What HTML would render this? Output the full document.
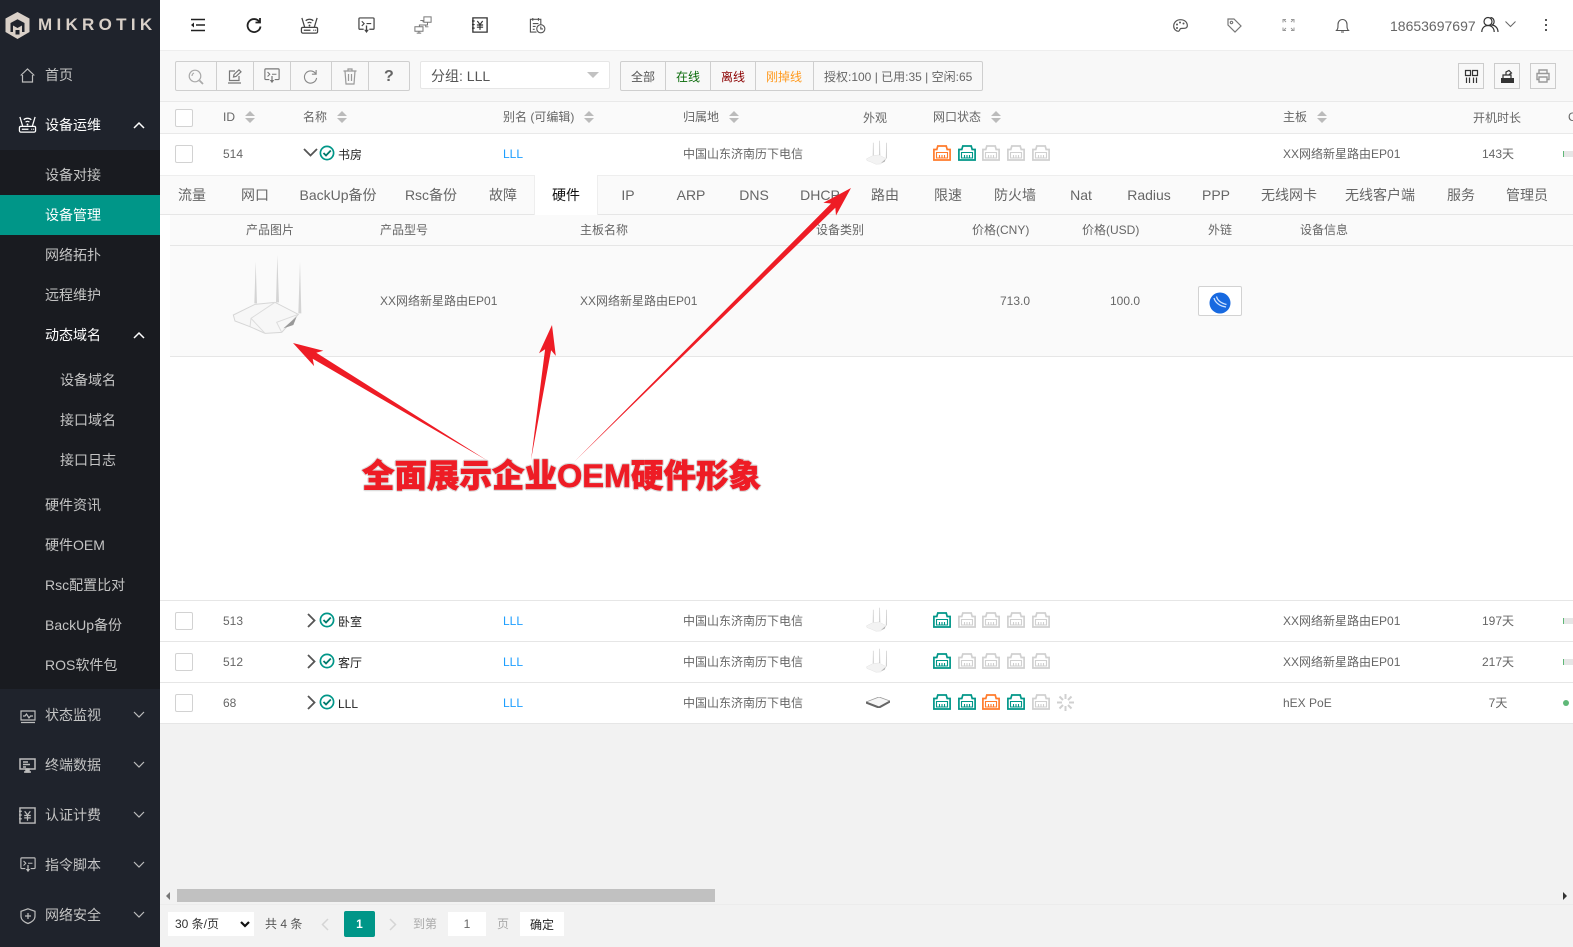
<!DOCTYPE html>
<html lang="zh"><head><meta charset="utf-8"><title>MikroTik</title>
<style>
html,body{margin:0;padding:0;width:1573px;height:947px;overflow:hidden;background:#f2f2f2}
body{position:relative;font-family:"Liberation Sans","Noto Sans CJK SC",sans-serif;font-size:12px;color:#666}
.a,.t,.i,svg.i{position:absolute}
.t{white-space:nowrap;line-height:20px;height:20px}
.c{transform:translateX(-50%)}
.r{transform:translateX(-100%)}
.b{background:#fff;border:1px solid #d2d2d2;box-sizing:border-box}
.cb{position:absolute;left:175px;width:18px;height:18px;background:#fff;border:1px solid #d2d2d2;border-radius:2px;box-sizing:border-box}
.side{font-size:14px;color:#c4c4c4}
.w{color:#fff}
.tab{font-size:14px;color:#666}
.hl{position:absolute;height:1px;background:#e6e6e6}
.lk{color:#1e9fff}
.nm{color:#222}
svg.i{fill:none;stroke:currentColor;stroke-width:1.2;overflow:visible}
.or{color:#ff7b2b}.gr{color:#009688}.gy{color:#d0d0d0}
</style></head><body>
<svg width="0" height="0" style="position:absolute">
<defs>
<symbol id="sort" viewBox="0 0 10 12"><path d="M5 0l5 5H0zM5 12L0 7h10z" fill="#bbb" stroke="none"/></symbol>
<symbol id="port" viewBox="0 0 18 16"><path d="M4.800 1h8.400l1 3.500h2.900V15H.9V4.500h2.900z" fill="none" stroke="currentColor" stroke-width="1.700"/><path d="M3.500 7.500h11V13h-11z" fill="none" stroke="currentColor" stroke-width="1.100"/><path d="M6.500 10v3M9 10v3M11.500 10v3" stroke="currentColor" stroke-width="1.100"/></symbol>
<symbol id="ok" viewBox="0 0 16 16"><circle cx="8" cy="8" r="6.600" fill="none" stroke="#009688" stroke-width="1.700"/><path d="M4.500 8l2.500 2.500 4.800-5" fill="none" stroke="#00796b" stroke-width="1.800"/></symbol>
<symbol id="rt" viewBox="50 25 210 245"><path d="M122 50l4 125h-7z M187 30l4 142h-8z M255 50l3 155h-8z" fill="#dedede"/><path d="M55 210l65-32 60-6 70 36-50 54-50 3-45-20-45-17z" fill="#f3f3f3" stroke="#ddd" stroke-width="4"/><path d="M205 250l40-35-10 25z" fill="#bbb"/></symbol>
<symbol id="hex" viewBox="0 0 24 11"><path d="M0 5l13-5 11 4-11 6z" fill="#f6f6f6" stroke="#999" stroke-width=".8"/><path d="M0 5l13 5v1L0 6z" fill="#444"/><path d="M13 10l11-6v1l-11 6z" fill="#999"/></symbol>
<symbol id="router" viewBox="0 0 20 20"><path d="M2 2l3 10M18 2l-3 10M6 5a6 6 0 0 1 8 0M8 7.500a3 3 0 0 1 4 0" fill="none" stroke="currentColor" stroke-width="1.300"/><circle cx="10" cy="10" r="1" fill="currentColor" stroke="none"/><rect x="1.500" y="12" width="17" height="6" rx="1.500" fill="none" stroke="currentColor" stroke-width="1.300"/><path d="M4 15h7M14 15h1M16 15h1" stroke="currentColor" stroke-width="1.300"/></symbol>
<symbol id="term" viewBox="0 0 18 18"><path d="M6 13H2a1 1 0 0 1-1-1V2a1 1 0 0 1 1-1h14a1 1 0 0 1 1 1v10a1 1 0 0 1-1 1h-4" fill="none" stroke="currentColor" stroke-width="1.300"/><path d="M4 4.500L6.500 7 4 9.500M9 7h5" fill="none" stroke="currentColor" stroke-width="1.200"/><path d="M9 9v6" stroke="currentColor" stroke-width="1.400"/><path d="M6.500 13.500h5L9 17z" fill="currentColor" stroke="none"/></symbol>
<symbol id="net" viewBox="0 0 20 20"><path d="M11 1h8v6h-8zM1 12h9v5H1zM3 19h5M5.500 17v2M15 7v3H6v2" fill="none" stroke="currentColor" stroke-width="1.100"/><path d="M7 5h3v2M13 10v2h3" fill="none" stroke="currentColor" stroke-width="1"/></symbol>
<symbol id="yen" viewBox="0 0 18 18"><path d="M1 1h16v16H1zM1 1v3M1 7v2M1 12v2" fill="none" stroke="currentColor" stroke-width="1.500"/><path d="M6 4.500L9 8.500l3-4M5.500 9h7M5.500 11.500h7M9 8.500V14.500" fill="none" stroke="currentColor" stroke-width="1.300"/><path d="M0 4.500h3M0 8.500h3M0 12.500h3" stroke="currentColor" stroke-width="1.300"/></symbol>
<symbol id="cal" viewBox="0 0 18 18"><path d="M8 16H1.500V2.500h11V8M4 1v3M10 1v3M4 7h6M4 10h3M4 13h2" fill="none" stroke="currentColor" stroke-width="1.200"/><circle cx="12.500" cy="12.500" r="4.300" fill="none" stroke="currentColor" stroke-width="1.200"/><path d="M12.500 10v2.700h2.300" fill="none" stroke="currentColor"/></symbol>
</defs>
</svg>

<!-- main panels -->
<div class="a" style="left:160px;top:0;width:1413px;height:50px;background:#fff"></div>
<div class="a" style="left:160px;top:50px;width:1413px;height:51px;background:#f8f8f8;border-top:1px solid #eee;box-sizing:border-box"></div>
<div class="a" style="left:160px;top:101px;width:1413px;height:33px;background:#fafafa;border-top:1px solid #e9e9e9;border-bottom:1px solid #e9e9e9;box-sizing:border-box"></div>
<div class="a" style="left:160px;top:134px;width:1413px;height:589px;background:#fff"></div>
<div class="a" style="left:160px;top:175px;width:1413px;height:40px;background:#fafafa;border-top:1px solid #eee;border-bottom:1px solid #e6e6e6;box-sizing:border-box"></div>
<div class="a" style="left:534px;top:175px;width:64px;height:41px;background:#fff;border-left:1px solid #eee;border-right:1px solid #eee;box-sizing:border-box"></div>
<div class="a" style="left:170px;top:215px;width:1403px;height:142px;background:#fafafa;border-bottom:1px solid #e6e6e6;box-sizing:border-box"></div>
<div class="hl" style="left:170px;top:245px;width:1403px"></div>
<div class="hl" style="left:160px;top:600px;width:1413px"></div>
<div class="hl" style="left:160px;top:641px;width:1413px"></div>
<div class="hl" style="left:160px;top:682px;width:1413px"></div>
<div class="hl" style="left:160px;top:723px;width:1413px"></div>

<!-- sidebar -->
<div class="a" style="left:0;top:0;width:160px;height:947px;background:#1f232c"></div>
<div class="a" style="left:0;top:150px;width:160px;height:539px;background:#191b20"></div>
<div class="a" style="left:0;top:195px;width:160px;height:40px;background:#009688"></div>
<svg class="i" style="left:5px;top:12px;color:#d9d0c8" width="25" height="27" viewBox="0 0 25 27"><path d="M12.500 0L24.500 6.500V20L12.500 27 .5 20V6.500z" fill="#d9d0c8" stroke="none"/><path d="M5.500 11l7-3.800 7 3.800v9h-2.500v-6.500l-4.500 2.500-4.500-2.500V20H5.500z" fill="#1f232c" stroke="none"/><path d="M10.500 18h4v4.500h-4z" fill="#1f232c" stroke="none"/></svg>
<div class="t" style="left:38px;top:15px;font-size:17px;font-weight:bold;letter-spacing:4.300px;color:#d9d0c8">MIKROTIK</div>

<svg class="i" style="left:20px;top:68px;color:#bdbdbd" width="15" height="15" viewBox="0 0 15 15"><path d="M.7 7.500L7.500 1l6.800 6.500M2.500 7v7h10V7"/></svg>
<div class="t side" style="left:45px;top:65px">首页</div>
<svg class="i" style="left:18px;top:115px;color:#fff" width="19" height="19"><use href="#router"/></svg>
<div class="t side w" style="left:45px;top:115px">设备运维</div>
<svg class="i" style="left:133px;top:122px;color:#fff;stroke-width:1.500" width="12" height="7" viewBox="0 0 12 7"><path d="M1 6l5-5 5 5"/></svg>
<div class="t side" style="left:45px;top:165px">设备对接</div>
<div class="t side w" style="left:45px;top:205px">设备管理</div>
<div class="t side" style="left:45px;top:245px">网络拓扑</div>
<div class="t side" style="left:45px;top:285px">远程维护</div>
<div class="t side w" style="left:45px;top:325px">动态域名</div>
<svg class="i" style="left:133px;top:332px;color:#fff;stroke-width:1.500" width="12" height="7" viewBox="0 0 12 7"><path d="M1 6l5-5 5 5"/></svg>
<div class="t side" style="left:60px;top:370px">设备域名</div>
<div class="t side" style="left:60px;top:410px">接口域名</div>
<div class="t side" style="left:60px;top:450px">接口日志</div>
<div class="t side" style="left:45px;top:495px">硬件资讯</div>
<div class="t side" style="left:45px;top:535px">硬件OEM</div>
<div class="t side" style="left:45px;top:575px">Rsc配置比对</div>
<div class="t side" style="left:45px;top:615px">BackUp备份</div>
<div class="t side" style="left:45px;top:655px">ROS软件包</div>

<svg class="i" style="left:20px;top:710px;color:#bdbdbd" width="16" height="13" viewBox="0 0 16 13"><path d="M1 1h14v9H1zM1 12.500h14M3 6h2l1.500-2L9 8l1.500-2H13"/></svg>
<div class="t side" style="left:45px;top:705px">状态监视</div>
<svg class="i" style="left:19px;top:758px;color:#bdbdbd;stroke-width:1.500" width="17" height="15" viewBox="0 0 17 15"><path d="M1 1h15v10H1zM4 4h5M4 6.500h7M4 9h3M5 14h7"/><path d="M7 11h3v3H7z" fill="#bdbdbd"/></svg>
<div class="t side" style="left:45px;top:755px">终端数据</div>
<svg class="i" style="left:19px;top:807px;color:#bdbdbd" width="17" height="17"><use href="#yen"/></svg>
<div class="t side" style="left:45px;top:805px">认证计费</div>
<svg class="i" style="left:20px;top:857px;color:#bdbdbd" width="16" height="16"><use href="#term"/></svg>
<div class="t side" style="left:45px;top:855px">指令脚本</div>
<svg class="i" style="left:20px;top:908px;color:#bdbdbd" width="16" height="16" viewBox="0 0 16 16"><path d="M8 .8l7 2.500v5c0 3.500-3.500 6-7 7.200-3.500-1.200-7-3.700-7-7.200v-5zM8 5v6M5 8h6"/></svg>
<div class="t side" style="left:45px;top:905px">网络安全</div>
<svg class="i" style="left:133px;top:711px;color:#bdbdbd" width="12" height="7" viewBox="0 0 12 7"><path d="M1 1l5 5 5-5"/></svg>
<svg class="i" style="left:133px;top:761px;color:#bdbdbd" width="12" height="7" viewBox="0 0 12 7"><path d="M1 1l5 5 5-5"/></svg>
<svg class="i" style="left:133px;top:811px;color:#bdbdbd" width="12" height="7" viewBox="0 0 12 7"><path d="M1 1l5 5 5-5"/></svg>
<svg class="i" style="left:133px;top:861px;color:#bdbdbd" width="12" height="7" viewBox="0 0 12 7"><path d="M1 1l5 5 5-5"/></svg>
<svg class="i" style="left:133px;top:911px;color:#bdbdbd" width="12" height="7" viewBox="0 0 12 7"><path d="M1 1l5 5 5-5"/></svg>

<!-- top bar icons -->
<svg class="i" style="left:190px;top:18px;color:#222;stroke-width:1.500" width="16" height="14" viewBox="0 0 16 14"><path d="M1 1.500h14M6 7h9M1 12.500h14"/><path d="M4 4.500L1 7l3 2.500z" fill="#222" stroke="none"/></svg>
<svg class="i" style="left:246px;top:17px;color:#222;stroke-width:1.800" width="16" height="16" viewBox="0 0 16 16"><path d="M13.500 5A6.500 6.500 0 1 0 14.500 9.500M14 1v4.500H9.500"/></svg>
<svg class="i" style="left:300px;top:16px;color:#444" width="19" height="19"><use href="#router"/></svg>
<svg class="i" style="left:358px;top:17px;color:#444" width="17" height="17"><use href="#term"/></svg>
<svg class="i" style="left:414px;top:16px;color:#777" width="18" height="18"><use href="#net"/></svg>
<svg class="i" style="left:472px;top:17px;color:#333" width="16" height="16"><use href="#yen"/></svg>
<svg class="i" style="left:529px;top:17px;color:#555" width="17" height="17"><use href="#cal"/></svg>

<svg class="i" style="left:1173px;top:19px;color:#555" width="15" height="13" viewBox="0 0 15 13"><path d="M7.500.7C3.500.7.700 3.500.700 7c0 3.500 2.800 5.300 4.500 5.300 1.800 0 1-2.300 2.600-2.800 1.500-.5 6.500.8 6.500-2.800C14.300 3 11.500.7 7.500.7z"/><circle cx="4" cy="5.500" r="1" fill="#555" stroke="none"/><circle cx="7" cy="3.500" r="1" fill="#555" stroke="none"/><circle cx="4" cy="9" r="1" fill="#555" stroke="none"/><circle cx="10.500" cy="4.500" r="1" fill="#555" stroke="none"/></svg>
<svg class="i" style="left:1227px;top:18px;color:#777" width="15" height="15" viewBox="0 0 15 15"><path d="M1 1h6l7 7-6 6-7-7z"/><circle cx="4.500" cy="4.500" r="1.200"/></svg>
<svg class="i" style="left:1283px;top:19px;color:#999;stroke-width:1" width="11" height="12" viewBox="0 0 11 12"><path d="M0 3.500V.5h3M8 .5h3v3M0 8.500v3h3M8 11.500h3v-3M1 1l2 2M10 1L8 3M1 11l2-2M10 11L8 9"/></svg>
<svg class="i" style="left:1336px;top:18px;color:#555;stroke-width:1.100" width="13" height="15" viewBox="0 0 13 15"><path d="M.5 12.500h12c-1.500-1.500-1.500-3-1.500-6C11 3.500 9 1.500 6.500 1.500S2 3.500 2 6.500c0 3 0 4.500-1.500 6zM5 14h3"/></svg>
<div class="t" style="left:1390px;top:16px;font-size:14px;color:#666">18653697697</div>
<svg class="i" style="left:1481px;top:16px;color:#333" width="18" height="17" viewBox="0 0 18 17"><circle cx="7" cy="5.500" r="4"/><path d="M.8 16c0-4 2.700-6.500 6.200-6.500s6.200 2.500 6.200 6.500M9.500 1.500a4 4 0 0 1 1.500 7.500c3.300.5 6 3 6 7"/></svg>
<svg class="i" style="left:1505px;top:21px;color:#666;stroke-width:1" width="11" height="6" viewBox="0 0 11 6"><path d="M.5.500l5 5 5-5"/></svg>
<div class="a" style="left:1545px;top:19px;width:2px;height:2px;background:#555"></div>
<div class="a" style="left:1545px;top:24px;width:2px;height:2px;background:#555"></div>
<div class="a" style="left:1545px;top:29px;width:2px;height:2px;background:#555"></div>

<!-- toolbar -->
<div class="a" style="left:175px;top:61px;width:235px;height:30px;border:1px solid #cfcfcf;border-radius:2px;box-sizing:border-box;background:#f8f8f8"></div>
<div class="a" style="left:216px;top:61px;width:1px;height:30px;background:#cfcfcf"></div>
<div class="a" style="left:253px;top:61px;width:1px;height:30px;background:#cfcfcf"></div>
<div class="a" style="left:290px;top:61px;width:1px;height:30px;background:#cfcfcf"></div>
<div class="a" style="left:331px;top:61px;width:1px;height:30px;background:#cfcfcf"></div>
<div class="a" style="left:368px;top:61px;width:1px;height:30px;background:#cfcfcf"></div>
<svg class="i" style="left:188px;top:69px;color:#aaa" width="16" height="16" viewBox="0 0 16 16"><circle cx="7" cy="7" r="5.800"/><path d="M11.500 11.500l3.500 3.500" stroke-width="1.800"/><path d="M4 7a3.500 3.500 0 0 1 2-3"/></svg>
<svg class="i" style="left:227px;top:69px;color:#777" width="15" height="15" viewBox="0 0 15 15"><path d="M8 2H2.500v9.500H12V7M1 14h13M6.500 8L7 5.500 12 .8l2 2L9 7.500z"/></svg>
<svg class="i" style="left:264px;top:68px;color:#777" width="16" height="16"><use href="#term"/></svg>
<svg class="i" style="left:303px;top:69px;color:#888" width="15" height="15" viewBox="0 0 16 16"><path d="M13.500 5A6.500 6.500 0 1 0 14.500 9.500M14 1v4.500H9.500"/></svg>
<svg class="i" style="left:343px;top:68px;color:#999" width="14" height="17" viewBox="0 0 14 17"><path d="M.5 3h13M5 3V1h4v2M2 3l1 13h8l1-13M5.500 6v7M8.500 6v7"/></svg>
<div class="t" style="left:384px;top:67px;font-size:16px;font-weight:bold;color:#666">?</div>

<div class="a b" style="left:420px;top:61px;width:190px;height:28px;border-color:#e6e6e6;border-radius:2px"></div>
<div class="t" style="left:431px;top:66px;font-size:14px;color:#555">分组: LLL</div>
<div class="a" style="left:587px;top:72px;width:0;height:0;border:6px solid transparent;border-top:6px solid #c2c2c2;border-bottom:0"></div>

<div class="a" style="left:620px;top:61px;width:363px;height:30px;border:1px solid #cfcfcf;border-radius:2px;box-sizing:border-box;background:#f8f8f8"></div>
<div class="a" style="left:665px;top:61px;width:1px;height:30px;background:#cfcfcf"></div>
<div class="a" style="left:710px;top:61px;width:1px;height:30px;background:#cfcfcf"></div>
<div class="a" style="left:755px;top:61px;width:1px;height:30px;background:#cfcfcf"></div>
<div class="a" style="left:813px;top:61px;width:1px;height:30px;background:#cfcfcf"></div>
<div class="t" style="left:631px;top:67px;color:#555">全部</div>
<div class="t" style="left:676px;top:67px;color:#0a6b0a">在线</div>
<div class="t" style="left:721px;top:67px;color:#8b0000">离线</div>
<div class="t" style="left:766px;top:67px;color:#ff9a1f">刚掉线</div>
<div class="t" style="left:824px;top:67px;color:#666">授权:100 | 已用:35 | 空闲:65</div>

<div class="a" style="left:1458px;top:63px;width:26px;height:26px;border:1px solid #ccc;box-sizing:border-box"></div>
<div class="a" style="left:1494px;top:63px;width:26px;height:26px;border:1px solid #ccc;box-sizing:border-box"></div>
<div class="a" style="left:1530px;top:63px;width:26px;height:26px;border:1px solid #ccc;box-sizing:border-box"></div>
<svg class="i" style="left:1465px;top:70px;color:#333" width="13" height="13" viewBox="0 0 13 13"><path d="M.5.500h5v5h-5zM7.500.5h5v5h-5zM1.500 7.500V13M4.500 7.500V13M8.500 7.500V13M11.500 7.500V13"/></svg>
<svg class="i" style="left:1501px;top:70px;color:#333" width="13" height="13" viewBox="0 0 13 13"><path d="M0 8h13v5H0z" fill="#333" stroke="none"/><path d="M2 8V5h8v3M5 5V2l3-1.500L10.500 3 8 4.500" stroke-width="1.200"/></svg>
<svg class="i" style="left:1536px;top:69px;color:#999;stroke-width:1.400" width="14" height="14" viewBox="0 0 14 14"><path d="M3 4V1h8v3M3 10.500H1V4.500h12v6h-2M3 8h8v5H3z"/></svg>

<!-- table header -->
<div class="cb" style="top:109px"></div>
<div class="t" style="left:223px;top:107px">ID</div>
<svg class="i" style="left:245px;top:111px" width="10" height="12"><use href="#sort"/></svg>
<div class="t" style="left:303px;top:107px">名称</div>
<svg class="i" style="left:337px;top:111px" width="10" height="12"><use href="#sort"/></svg>
<div class="t" style="left:503px;top:107px">别名 (可编辑)</div>
<svg class="i" style="left:584px;top:111px" width="10" height="12"><use href="#sort"/></svg>
<div class="t" style="left:683px;top:107px">归属地</div>
<svg class="i" style="left:729px;top:111px" width="10" height="12"><use href="#sort"/></svg>
<div class="t" style="left:863px;top:108px">外观</div>
<div class="t" style="left:933px;top:107px">网口状态</div>
<svg class="i" style="left:991px;top:111px" width="10" height="12"><use href="#sort"/></svg>
<div class="t" style="left:1283px;top:107px">主板</div>
<svg class="i" style="left:1317px;top:111px" width="10" height="12"><use href="#sort"/></svg>
<div class="t" style="left:1473px;top:108px">开机时长</div>
<div class="t" style="left:1568px;top:107px">C</div>

<!-- row 514 -->
<div class="cb" style="top:145px"></div>
<div class="t" style="left:223px;top:144px">514</div>
<svg class="i" style="left:303px;top:148px;color:#555;stroke-width:1.800" width="15" height="9" viewBox="0 0 15 9"><path d="M1 1l6.500 6.500L14 1"/></svg>
<svg class="i" style="left:319px;top:145px" width="16" height="16"><use href="#ok"/></svg>
<div class="t nm" style="left:338px;top:145px">书房</div>
<div class="t lk" style="left:503px;top:144px">LLL</div>
<div class="t" style="left:683px;top:144px">中国山东济南历下电信</div>
<svg class="i" style="left:866px;top:140px" width="21" height="25"><use href="#rt"/></svg>
<svg class="i or" style="left:933px;top:145px" width="18" height="16"><use href="#port"/></svg>
<svg class="i gr" style="left:958px;top:145px" width="18" height="16"><use href="#port"/></svg>
<svg class="i gy" style="left:982px;top:145px" width="18" height="16"><use href="#port"/></svg>
<svg class="i gy" style="left:1007px;top:145px" width="18" height="16"><use href="#port"/></svg>
<svg class="i gy" style="left:1032px;top:145px" width="18" height="16"><use href="#port"/></svg>
<div class="t" style="left:1283px;top:144px">XX网络新星路由EP01</div>
<div class="t c" style="left:1498px;top:144px">143天</div>
<div class="a" style="left:1563px;top:151px;width:10px;height:6px;background:#e6e6e6;border-left:1px solid #5fb878;box-sizing:border-box"></div>

<!-- tabs -->
<div class="t c tab" style="left:192px;top:185px">流量</div>
<div class="t c tab" style="left:255px;top:185px">网口</div>
<div class="t c tab" style="left:338px;top:185px">BackUp备份</div>
<div class="t c tab" style="left:431px;top:185px">Rsc备份</div>
<div class="t c tab" style="left:503px;top:185px">故障</div>
<div class="t c tab" style="left:566px;top:185px;color:#111">硬件</div>
<div class="t c tab" style="left:628px;top:185px">IP</div>
<div class="t c tab" style="left:691px;top:185px">ARP</div>
<div class="t c tab" style="left:754px;top:185px">DNS</div>
<div class="t c tab" style="left:820px;top:185px">DHCP</div>
<div class="t c tab" style="left:885px;top:185px">路由</div>
<div class="t c tab" style="left:948px;top:185px">限速</div>
<div class="t c tab" style="left:1015px;top:185px">防火墙</div>
<div class="t c tab" style="left:1081px;top:185px">Nat</div>
<div class="t c tab" style="left:1149px;top:185px">Radius</div>
<div class="t c tab" style="left:1216px;top:185px">PPP</div>
<div class="t c tab" style="left:1289px;top:185px">无线网卡</div>
<div class="t c tab" style="left:1380px;top:185px">无线客户端</div>
<div class="t c tab" style="left:1461px;top:185px">服务</div>
<div class="t c tab" style="left:1527px;top:185px">管理员</div>

<!-- sub table -->
<div class="t" style="left:246px;top:220px">产品图片</div>
<div class="t" style="left:380px;top:220px">产品型号</div>
<div class="t" style="left:580px;top:220px">主板名称</div>
<div class="t" style="left:816px;top:220px">设备类别</div>
<div class="t" style="left:972px;top:220px">价格(CNY)</div>
<div class="t" style="left:1082px;top:220px">价格(USD)</div>
<div class="t" style="left:1208px;top:220px">外链</div>
<div class="t" style="left:1300px;top:220px">设备信息</div>
<svg class="i" style="left:215px;top:245px" width="110" height="100" viewBox="0 0 330 300"><path d="M122 50l4 125h-8z M187 30l5 142h-9z M255 50l4 155h-9z" fill="#d4d4d4" stroke="none"/><path d="M55 210l65-32 60-6 70 36-50 54-50 3-45-20-45-17z" fill="#f7f7f7" stroke="#d6d6d6" stroke-width="3"/><path d="M105 245l3-25 72-48M150 265l-42-45M200 262l-15-30 65-24" stroke="#dcdcdc" stroke-width="3" fill="none"/><path d="M205 250l40-35-10 25z" fill="#999" stroke="none"/></svg>
<div class="t" style="left:380px;top:291px">XX网络新星路由EP01</div>
<div class="t" style="left:580px;top:291px">XX网络新星路由EP01</div>
<div class="t r" style="left:1030px;top:291px">713.0</div>
<div class="t r" style="left:1140px;top:291px">100.0</div>
<div class="a" style="left:1198px;top:286px;width:44px;height:30px;background:#fff;border:1px solid #d2d2d2;border-radius:2px;box-sizing:border-box"></div>
<svg class="i" style="left:1209px;top:292px" width="22" height="22" viewBox="0 0 22 22"><circle cx="11" cy="11" r="10.500" fill="#1769e0" stroke="none"/><path d="M5 6c1 4 5 8 12 9M7.500 4.500c1 4 4 6.500 10 8" stroke="#cfe3ff" stroke-width="1.300" fill="none"/></svg>

<!-- rows -->
<div class="cb" style="top:612px"></div>
<div class="t" style="left:223px;top:611px">513</div>
<svg class="i" style="left:307px;top:613px;color:#555;stroke-width:1.800" width="9" height="15" viewBox="0 0 9 15"><path d="M1 1l6.500 6.500L1 14"/></svg>
<svg class="i" style="left:319px;top:612px" width="16" height="16"><use href="#ok"/></svg>
<div class="t nm" style="left:338px;top:612px">卧室</div>
<div class="t lk" style="left:503px;top:611px">LLL</div>
<div class="t" style="left:683px;top:611px">中国山东济南历下电信</div>
<svg class="i" style="left:866px;top:607px" width="21" height="25"><use href="#rt"/></svg>
<svg class="i gr" style="left:933px;top:612px" width="18" height="16"><use href="#port"/></svg>
<svg class="i gy" style="left:958px;top:612px" width="18" height="16"><use href="#port"/></svg>
<svg class="i gy" style="left:982px;top:612px" width="18" height="16"><use href="#port"/></svg>
<svg class="i gy" style="left:1007px;top:612px" width="18" height="16"><use href="#port"/></svg>
<svg class="i gy" style="left:1032px;top:612px" width="18" height="16"><use href="#port"/></svg>
<div class="t" style="left:1283px;top:611px">XX网络新星路由EP01</div>
<div class="t c" style="left:1498px;top:611px">197天</div>
<div class="a" style="left:1563px;top:618px;width:10px;height:6px;background:#e6e6e6;border-left:1px solid #5fb878;box-sizing:border-box"></div>

<div class="cb" style="top:653px"></div>
<div class="t" style="left:223px;top:652px">512</div>
<svg class="i" style="left:307px;top:654px;color:#555;stroke-width:1.800" width="9" height="15" viewBox="0 0 9 15"><path d="M1 1l6.500 6.500L1 14"/></svg>
<svg class="i" style="left:319px;top:653px" width="16" height="16"><use href="#ok"/></svg>
<div class="t nm" style="left:338px;top:653px">客厅</div>
<div class="t lk" style="left:503px;top:652px">LLL</div>
<div class="t" style="left:683px;top:652px">中国山东济南历下电信</div>
<svg class="i" style="left:866px;top:648px" width="21" height="25"><use href="#rt"/></svg>
<svg class="i gr" style="left:933px;top:653px" width="18" height="16"><use href="#port"/></svg>
<svg class="i gy" style="left:958px;top:653px" width="18" height="16"><use href="#port"/></svg>
<svg class="i gy" style="left:982px;top:653px" width="18" height="16"><use href="#port"/></svg>
<svg class="i gy" style="left:1007px;top:653px" width="18" height="16"><use href="#port"/></svg>
<svg class="i gy" style="left:1032px;top:653px" width="18" height="16"><use href="#port"/></svg>
<div class="t" style="left:1283px;top:652px">XX网络新星路由EP01</div>
<div class="t c" style="left:1498px;top:652px">217天</div>
<div class="a" style="left:1563px;top:659px;width:10px;height:6px;background:#e6e6e6;border-left:1px solid #5fb878;box-sizing:border-box"></div>

<div class="cb" style="top:694px"></div>
<div class="t" style="left:223px;top:693px">68</div>
<svg class="i" style="left:307px;top:695px;color:#555;stroke-width:1.800" width="9" height="15" viewBox="0 0 9 15"><path d="M1 1l6.500 6.500L1 14"/></svg>
<svg class="i" style="left:319px;top:694px" width="16" height="16"><use href="#ok"/></svg>
<div class="t nm" style="left:338px;top:694px">LLL</div>
<div class="t lk" style="left:503px;top:693px">LLL</div>
<div class="t" style="left:683px;top:693px">中国山东济南历下电信</div>
<svg class="i" style="left:866px;top:697px" width="24" height="11"><use href="#hex"/></svg>
<svg class="i gr" style="left:933px;top:694px" width="18" height="16"><use href="#port"/></svg>
<svg class="i gr" style="left:958px;top:694px" width="18" height="16"><use href="#port"/></svg>
<svg class="i or" style="left:982px;top:694px" width="18" height="16"><use href="#port"/></svg>
<svg class="i gr" style="left:1007px;top:694px" width="18" height="16"><use href="#port"/></svg>
<svg class="i gy" style="left:1032px;top:694px" width="18" height="16"><use href="#port"/></svg>
<svg class="i gy" style="left:1056px;top:693px;stroke-width:2" width="19" height="19" viewBox="0 0 19 19"><path d="M9.500 1v5M9.500 13v5M1 9.500h5M13 9.500h5M3.500 3.500L7 7M12 12l3.500 3.500M15.500 3.500L12 7M7 12l-3.500 3.500"/></svg>
<div class="t" style="left:1283px;top:693px">hEX PoE</div>
<div class="t c" style="left:1498px;top:693px">7天</div>
<div class="a" style="left:1563px;top:700px;width:6px;height:6px;border-radius:3px;background:#5fb878"></div>

<!-- scrollbar -->
<div class="a" style="left:166px;top:892px;width:0;height:0;border:4px solid transparent;border-right:4px solid #777;border-left:0"></div>
<div class="a" style="left:177px;top:889px;width:538px;height:13px;background:#c1c1c1"></div>
<div class="a" style="left:1563px;top:892px;width:0;height:0;border:4px solid transparent;border-left:4px solid #333;border-right:0"></div>
<div class="hl" style="left:160px;top:904px;width:1413px;background:#ececec"></div>

<!-- pagination -->
<div class="a" style="left:168px;top:912px;width:86px;height:24px;background:#fff"></div>
<div class="t" style="left:175px;top:914px;color:#333">30 条/页</div>
<svg class="i" style="left:240px;top:921px;color:#111;stroke-width:2.200" width="10" height="6" viewBox="0 0 10 6"><path d="M1 1l4 4 4-4"/></svg>
<div class="t" style="left:265px;top:914px;color:#555">共 4 条</div>
<svg class="i" style="left:321px;top:918px;color:#d5d5d5;stroke-width:1.500" width="8" height="13" viewBox="0 0 8 13"><path d="M7 1L1.500 6.500 7 12"/></svg>
<div class="a" style="left:344px;top:911px;width:31px;height:26px;background:#009688;border-radius:2px"></div>
<div class="t c" style="left:359.500px;top:914px;color:#fff;font-weight:bold">1</div>
<svg class="i" style="left:389px;top:918px;color:#d5d5d5;stroke-width:1.500" width="8" height="13" viewBox="0 0 8 13"><path d="M1 1l5.500 5.500L1 12"/></svg>
<div class="t" style="left:413px;top:914px;color:#aaa">到第</div>
<div class="a" style="left:448px;top:912px;width:38px;height:24px;background:#fff"></div>
<div class="t c" style="left:467px;top:914px;color:#666">1</div>
<div class="t" style="left:497px;top:914px;color:#aaa">页</div>
<div class="a" style="left:520px;top:912px;width:44px;height:24px;background:#fff"></div>
<div class="t c" style="left:542px;top:915px;color:#222">确定</div>

<!-- arrows -->
<svg class="a" style="left:0;top:0" width="1573" height="947">
<polygon fill="#ee1c25" points="293,343 323.300,350.700 316.300,352.800 488,461 312.700,358.800 314.100,366.100"/>
<polygon fill="#ee1c25" points="552,325 555.800,355.900 551.100,350.200 531,460 545.100,349.200 539,353.300"/>
<polygon fill="#ee1c25" points="851,188 836,215.500 835.300,207.700 574,462 831.100,203.500 823.400,202.700"/>
</svg>
<div class="a" style="left:362px;top:458px;font-size:32.500px;line-height:36px;font-weight:900;color:#ee1c25;white-space:nowrap;-webkit-text-stroke:.6px #ee1c25;text-shadow:1.500px 0 #ddd,-1.500px 0 #ddd,0 1.500px #ddd,0 -1.500px #ddd,1px 1px #ddd,-1px -1px #ddd,1px -1px #ddd,-1px 1px #ddd">全面展示企业OEM硬件形象</div>
</body></html>
